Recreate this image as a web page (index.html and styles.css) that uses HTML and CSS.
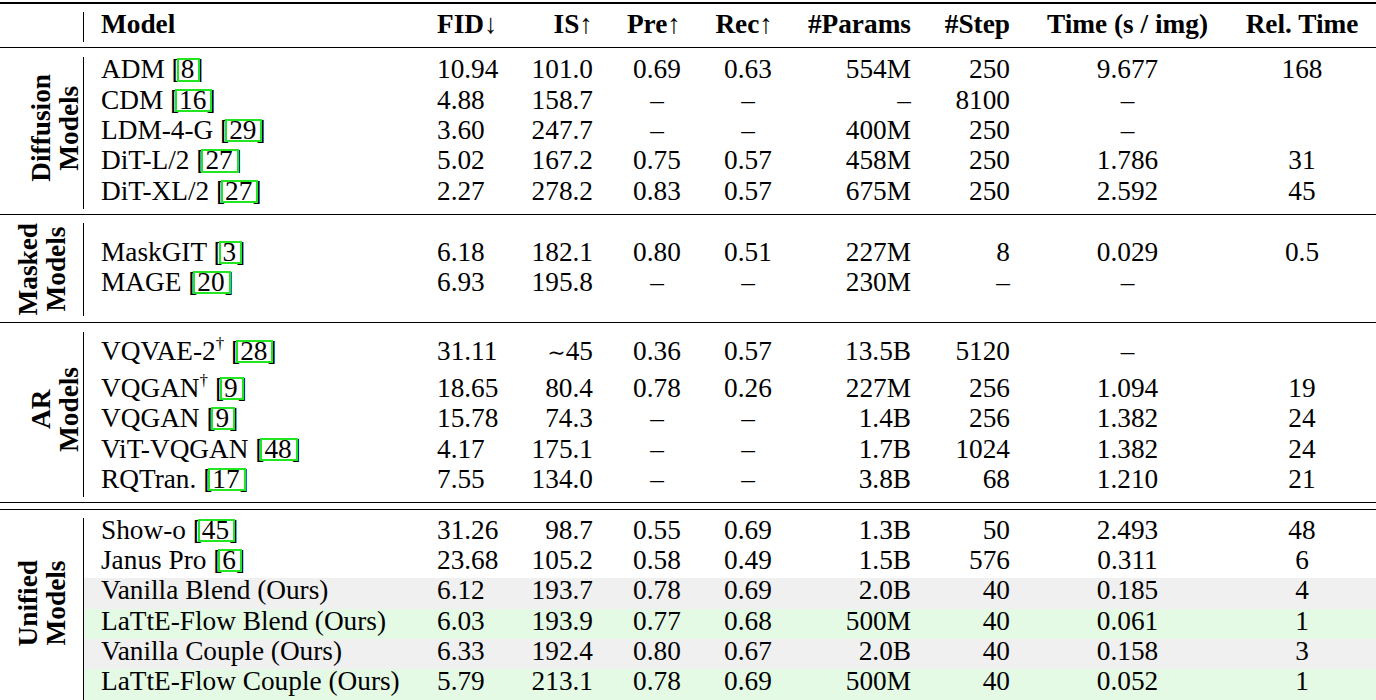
FILE: index.html
```html
<!DOCTYPE html>
<html>
<head>
<meta charset="utf-8">
<title>Comparison table</title>
<link rel="stylesheet" href="styles.css">
</head>
<body>
<div class="table">
  <div class="rule heavy top"></div>

  <div class="sec head">
    <div class="lab"></div>
    <div class="rows">
      <div class="row hdr">
        <div class="c m">Model</div>
        <div class="c l">FID<span class="arr">↓</span></div>
        <div class="c r">IS<span class="arr">↑</span></div>
        <div class="c r">Pre<span class="arr">↑</span></div>
        <div class="c r">Rec<span class="arr">↑</span></div>
        <div class="c r">#Params</div>
        <div class="c r">#Step</div>
        <div class="c cen">Time (s / img)</div>
        <div class="c cen">Rel. Time</div>
      </div>
    </div>
  </div>

  <div class="rule mid-head"></div>

  <div class="sec diff">
    <div class="lab"><div class="vt wide">Diffusion<br>Models</div></div>
    <div class="rows">
      <div class="row"><div class="c m">ADM [<span class="ct">8</span>]</div><div class="c l">10.94</div><div class="c r">101.0</div><div class="c p">0.69</div><div class="c q">0.63</div><div class="c r">554M</div><div class="c r">250</div><div class="c cen">9.677</div><div class="c cen">168</div></div>
      <div class="row"><div class="c m">CDM [<span class="ct">16</span>]</div><div class="c l">4.88</div><div class="c r">158.7</div><div class="c p">–</div><div class="c q">–</div><div class="c r">–</div><div class="c r">8100</div><div class="c cen">–</div><div class="c cen"></div></div>
      <div class="row"><div class="c m">LDM-4-G [<span class="ct">29</span>]</div><div class="c l">3.60</div><div class="c r">247.7</div><div class="c p">–</div><div class="c q">–</div><div class="c r">400M</div><div class="c r">250</div><div class="c cen">–</div><div class="c cen"></div></div>
      <div class="row"><div class="c m">DiT-L/2 [<span class="ct">27</span>]</div><div class="c l">5.02</div><div class="c r">167.2</div><div class="c p">0.75</div><div class="c q">0.57</div><div class="c r">458M</div><div class="c r">250</div><div class="c cen">1.786</div><div class="c cen">31</div></div>
      <div class="row"><div class="c m">DiT-XL/2 [<span class="ct">27</span>]</div><div class="c l">2.27</div><div class="c r">278.2</div><div class="c p">0.83</div><div class="c q">0.57</div><div class="c r">675M</div><div class="c r">250</div><div class="c cen">2.592</div><div class="c cen">45</div></div>
    </div>
  </div>

  <div class="rule mid-a"></div>

  <div class="sec masked">
    <div class="lab"><div class="vt narrow">Masked<br>Models</div></div>
    <div class="rows">
      <div class="row"><div class="c m">MaskGIT [<span class="ct">3</span>]</div><div class="c l">6.18</div><div class="c r">182.1</div><div class="c p">0.80</div><div class="c q">0.51</div><div class="c r">227M</div><div class="c r">8</div><div class="c cen">0.029</div><div class="c cen">0.5</div></div>
      <div class="row"><div class="c m">MAGE [<span class="ct">20</span>]</div><div class="c l">6.93</div><div class="c r">195.8</div><div class="c p">–</div><div class="c q">–</div><div class="c r">230M</div><div class="c r">–</div><div class="c cen">–</div><div class="c cen"></div></div>
    </div>
  </div>

  <div class="rule mid-b"></div>

  <div class="sec ar">
    <div class="lab"><div class="vt wide">AR<br>Models</div></div>
    <div class="rows">
      <div class="row tall"><div class="c m">VQVAE-2<sup class="dg">†</sup> [<span class="ct">28</span>]</div><div class="c l">31.11</div><div class="c r"><span class="sim">∼</span>45</div><div class="c p">0.36</div><div class="c q">0.57</div><div class="c r">13.5B</div><div class="c r">5120</div><div class="c cen">–</div><div class="c cen"></div></div>
      <div class="row tall"><div class="c m">VQGAN<sup class="dg">†</sup> [<span class="ct">9</span>]</div><div class="c l">18.65</div><div class="c r">80.4</div><div class="c p">0.78</div><div class="c q">0.26</div><div class="c r">227M</div><div class="c r">256</div><div class="c cen">1.094</div><div class="c cen">19</div></div>
      <div class="row"><div class="c m">VQGAN [<span class="ct">9</span>]</div><div class="c l">15.78</div><div class="c r">74.3</div><div class="c p">–</div><div class="c q">–</div><div class="c r">1.4B</div><div class="c r">256</div><div class="c cen">1.382</div><div class="c cen">24</div></div>
      <div class="row"><div class="c m">ViT-VQGAN [<span class="ct">48</span>]</div><div class="c l">4.17</div><div class="c r">175.1</div><div class="c p">–</div><div class="c q">–</div><div class="c r">1.7B</div><div class="c r">1024</div><div class="c cen">1.382</div><div class="c cen">24</div></div>
      <div class="row"><div class="c m">RQTran. [<span class="ct">17</span>]</div><div class="c l">7.55</div><div class="c r">134.0</div><div class="c p">–</div><div class="c q">–</div><div class="c r">3.8B</div><div class="c r">68</div><div class="c cen">1.210</div><div class="c cen">21</div></div>
    </div>
  </div>

  <div class="double"><div class="rule"></div><div class="rule second"></div></div>

  <div class="sec unified">
    <div class="lab"><div class="vt narrow">Unified<br>Models</div></div>
    <div class="rows">
      <div class="row"><div class="c m">Show-o [<span class="ct">45</span>]</div><div class="c l">31.26</div><div class="c r">98.7</div><div class="c p">0.55</div><div class="c q">0.69</div><div class="c r">1.3B</div><div class="c r">50</div><div class="c cen">2.493</div><div class="c cen">48</div></div>
      <div class="row"><div class="c m">Janus Pro [<span class="ct">6</span>]</div><div class="c l">23.68</div><div class="c r">105.2</div><div class="c p">0.58</div><div class="c q">0.49</div><div class="c r">1.5B</div><div class="c r">576</div><div class="c cen">0.311</div><div class="c cen">6</div></div>
      <div class="row gray"><div class="c m">Vanilla Blend (Ours)</div><div class="c l">6.12</div><div class="c r">193.7</div><div class="c p">0.78</div><div class="c q">0.69</div><div class="c r">2.0B</div><div class="c r">40</div><div class="c cen">0.185</div><div class="c cen">4</div></div>
      <div class="row green"><div class="c m">LaTtE-Flow Blend (Ours)</div><div class="c l">6.03</div><div class="c r">193.9</div><div class="c p">0.77</div><div class="c q">0.68</div><div class="c r">500M</div><div class="c r">40</div><div class="c cen">0.061</div><div class="c cen">1</div></div>
      <div class="row gray"><div class="c m">Vanilla Couple (Ours)</div><div class="c l">6.33</div><div class="c r">192.4</div><div class="c p">0.80</div><div class="c q">0.67</div><div class="c r">2.0B</div><div class="c r">40</div><div class="c cen">0.158</div><div class="c cen">3</div></div>
      <div class="row green"><div class="c m">LaTtE-Flow Couple (Ours)</div><div class="c l">5.79</div><div class="c r">213.1</div><div class="c p">0.78</div><div class="c q">0.69</div><div class="c r">500M</div><div class="c r">40</div><div class="c cen">0.052</div><div class="c cen">1</div></div>
    </div>
  </div>

  <div class="rule heavy bottom"></div>
</div>
</body>
</html>
```

FILE: styles.css
```css
* {
  box-sizing: border-box;
  margin: 0;
  padding: 0;
}

html, body {
  background: #ffffff;
}

body {
  margin: 0;
  width: 1376px;
  height: 700px;
  overflow: hidden;
  font-family: "Liberation Serif", "Times New Roman", "DejaVu Serif", serif;
  font-size: 27.3px;
  color: #000;
}

.table {
  padding-top: 1.5px;
}

/* horizontal rules */
.rule {
  height: 1px;
  background: #000;
}
.rule.heavy {
  height: 2px;
}
.rule.mid-head { margin-top: 5px; }
.rule.mid-a { margin-top: 4.8px; }
.rule.mid-b { margin-top: 6.2px; }
.rule.bottom { margin-top: 5px; }

.double {
  margin-top: 4.8px;
}
.double .second {
  margin-top: 6.3px;
}

/* sections */
.sec {
  display: flex;
}
.sec.head { margin-top: 8.1px; }
.sec.diff { margin-top: 9.6px; }
.sec.masked { margin-top: 8.5px; }
.sec.ar { margin-top: 9.5px; }
.sec.unified { margin-top: 7.5px; }

.sec.masked .rows {
  padding-top: 16.7px;
  padding-bottom: 7.7px;
}

.lab {
  width: 84px;
  flex: none;
  border-right: 1px solid #000;
  display: flex;
  align-items: center;
}

.vt {
  writing-mode: vertical-rl;
  text-orientation: sideways;
  transform: rotate(180deg);
  font-weight: bold;
  line-height: 28px;
  text-align: center;
  white-space: nowrap;
  margin-bottom: 10px;
}
.vt.wide { margin-left: 27px; }
.vt.narrow { margin-left: 13.5px; }
.sec.masked .vt { margin-bottom: 0; }

.rows {
  flex: 1;
}

.row {
  display: grid;
  grid-template-columns: 336px 100px 90px 88px 92px 138px 99px 201px 148px;
  height: 30.3px;
  line-height: 25.2px;
}
.row.tall {
  height: 36.9px;
  padding-top: 6.6px;
}
.row.hdr {
  font-weight: bold;
}
.row.gray {
  background: #f0f0f0;
}
.row.green {
  background: #e4fae4;
}

.c {
  white-space: nowrap;
}
.c.m { padding-left: 17px; }
.c.l { padding-left: 17px; }
.c.r { text-align: right; padding-right: 17px; }
.c.cen { text-align: center; }
/* centred numeric columns (Pre, Rec) */
.c.p { text-align: center; padding-left: 6px; }
.c.q { text-align: center; padding-left: 8px; }

.arr {
  font-weight: normal;
}

.sim {
  font-family: "DejaVu Serif", serif;
  font-size: 22px;
}

/* superscript dagger */
.dg {
  font-size: 17px;
  line-height: 0;
  vertical-align: 11px;
}

/* citation link box */
.ct {
  position: relative;
}
.ct::after {
  content: "";
  position: absolute;
  left: -4px;
  right: -6px;
  top: 4px;
  bottom: 2.8px;
  border: 2px solid #22e622;
}
```
